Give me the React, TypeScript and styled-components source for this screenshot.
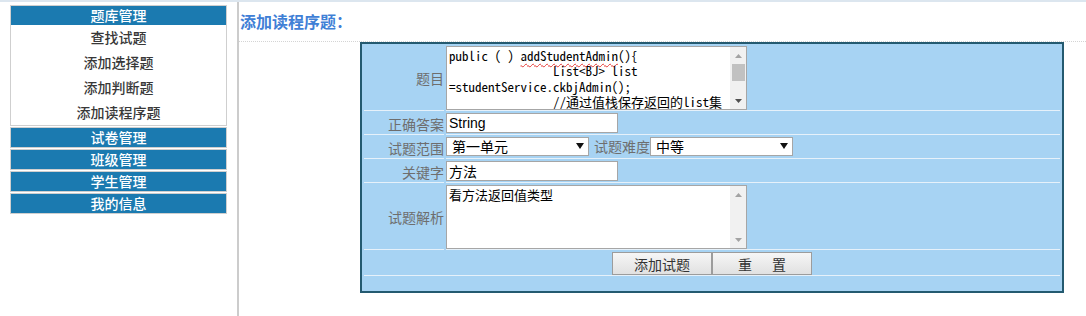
import React from 'react';
import styled, { createGlobalStyle } from 'styled-components';

const GlobalStyle = createGlobalStyle`
  html, body { margin: 0; padding: 0; background: #fff; }
  body { font-family: "Noto Sans CJK SC", sans-serif; font-size: 14px; }
`;

const Page = styled.div`
  width: 1086px;
  height: 316px;
  overflow: hidden;
  display: flex;
  flex-direction: column;
`;

const TopStrip = styled.div`
  flex: none;
  height: 2px;
  background: #dce6ef;
`;

const Body = styled.div`
  flex: 1;
  display: flex;
  min-height: 0;
`;

const Sidebar = styled.nav`
  flex: none;
  width: 217px;
  padding: 3px 10px 0 10px;
  display: flex;
  flex-direction: column;
  gap: 1px;
`;

const MenuGroup = styled.div`
  border: 1px solid #cfcfcf;
  display: flex;
  flex-direction: column;
`;

const MenuHeader = styled.div`
  height: 19px;
  line-height: 19px;
  background: #1b7ab0;
  color: #fff;
  text-align: center;
  font-size: 14px;
  font-weight: 500;
`;

const MenuItem = styled.div`
  height: 25px;
  line-height: 25px;
  text-align: center;
  color: #383838;
  font-size: 14px;
  font-weight: 500;
`;

const Main = styled.main`
  flex: 1;
  border-left: 2px solid #cccccc;
  display: flex;
  flex-direction: column;
`;

const Title = styled.h2`
  margin: 0;
  height: 40px;
  box-sizing: border-box;
  padding: 0 0 2px 1px;
  display: flex;
  align-items: center;
  border-bottom: 1px dotted #d4d4d4;
  color: #3f80d6;
  font-size: 16px;
  font-weight: bold;
`;

const FormBox = styled.div`
  margin-left: 121px;
  width: 704px;
  height: 251px;
  box-sizing: border-box;
  border: 2px solid #245a70;
  background: #a7d3f3;
  padding: 2px;
  display: grid;
  grid-template-columns: 80px 1fr;
  grid-template-rows: 65px 22px 22px 22px 65px 24px 1fr;
  gap: 2px;
`;

const Cell = styled.div`
  box-sizing: border-box;
  border-bottom: 1px solid #e6f1fa;
  display: flex;
  min-width: 0;
`;

const LabelCell = styled(Cell)`
  align-items: center;
  justify-content: flex-end;
  color: #6e6e6e;
  font-size: 14px;
`;

const FieldCell = styled(Cell)`
  align-items: flex-start;
`;

const ActionCell = styled(Cell)`
  grid-column: 1 / -1;
  align-items: flex-start;
  justify-content: center;
`;

const SpacerCell = styled.div`
  grid-column: 1 / -1;
`;

const TextInput = styled.input`
  width: 172px;
  height: 20px;
  box-sizing: border-box;
  border: 1px solid #a6a6a6;
  padding: 0 2px;
  margin: 0;
  background: #fff;
  color: #000;
  font-family: "Liberation Sans", "Noto Sans CJK SC", sans-serif;
  font-size: 14px;
  outline: none;
`;

const SelectWrap = styled.div`
  position: relative;
  display: inline-flex;
  flex: none;
`;

const Select = styled.select`
  appearance: none;
  -webkit-appearance: none;
  width: 143px;
  height: 19px;
  box-sizing: border-box;
  border: 1px solid #a6a6a6;
  border-radius: 0;
  margin: 0;
  padding: 0 16px 0 5px;
  background: #fff;
  color: #000;
  font-family: "Noto Sans CJK SC", sans-serif;
  font-size: 14px;
  line-height: 17px;
  outline: none;
`;

const SelectArrow = styled.svg`
  position: absolute;
  right: 5px;
  top: 6px;
  pointer-events: none;
`;

const InlineLabel = styled.span`
  margin-left: 5px;
  color: #6e6e6e;
  font-size: 14px;
  line-height: 19px;
`;

const TextBox = styled.div`
  width: 301px;
  height: 64px;
  box-sizing: border-box;
  border: 1px solid #a6a6a6;
  background: #fff;
  display: flex;
`;

const TextContent = styled.div`
  flex: 1;
  padding: 1px 2px;
  overflow: hidden;
  white-space: pre;
  tab-size: 8;
  color: #000;
  font-family: "Noto Sans Mono CJK SC", "Liberation Mono", monospace;
  font-size: 13px;
  line-height: 15.33px;
`;

const Squiggle = styled.span`
  text-decoration: underline wavy #e53935;
  text-decoration-thickness: 1px;
  text-underline-offset: 2px;
`;

const ScrollBar = styled.div`
  flex: none;
  width: 16px;
  background: #f1f1f1;
  display: flex;
  flex-direction: column;
`;

const ScrollButton = styled.div`
  flex: none;
  height: 17px;
  display: flex;
  align-items: center;
  justify-content: center;
`;

const ScrollTrack = styled.div`
  flex: 1;
  display: flex;
  flex-direction: column;
  align-items: center;
`;

const ScrollThumb = styled.div<{ $height: number }>`
  width: 13px;
  height: ${(p) => p.$height}px;
  background: #c1c1c1;
`;

const Button = styled.button`
  width: 100px;
  height: 23px;
  box-sizing: border-box;
  margin: 0;
  padding: 0;
  border: 1px solid #9c9c9c;
  background: linear-gradient(#f6f6f6, #e1e1e1);
  color: #333;
  font-family: "Noto Sans CJK SC", sans-serif;
  font-size: 14px;
  line-height: 20px;
  word-spacing: 17px;
`;

const Triangle: React.FC<{ dir: 'up' | 'down'; color: string }> = ({ dir, color }) => (
  <svg width="7" height="4" viewBox="0 0 7 4">
    <path d={dir === 'up' ? 'M0 4 L3.5 0 L7 4 Z' : 'M0 0 L7 0 L3.5 4 Z'} fill={color} />
  </svg>
);

const Scroller: React.FC<{ thumb?: boolean }> = ({ thumb }) => (
  <ScrollBar>
    <ScrollButton>
      <Triangle dir="up" color="#a3a3a3" />
    </ScrollButton>
    <ScrollTrack>{thumb && <ScrollThumb $height={17} />}</ScrollTrack>
    <ScrollButton>
      <Triangle dir="down" color={thumb ? '#505050' : '#a3a3a3'} />
    </ScrollButton>
  </ScrollBar>
);

const Dropdown: React.FC<{ value: string; options: string[] }> = ({ value, options }) => (
  <SelectWrap>
    <Select defaultValue={value}>
      {options.map((o) => (
        <option key={o}>{o}</option>
      ))}
    </Select>
    <SelectArrow width="8" height="6" viewBox="0 0 8 6">
      <path d="M0 0 L8 0 L4 6 Z" fill="#111" />
    </SelectArrow>
  </SelectWrap>
);

const menus = ['试卷管理', '班级管理', '学生管理', '我的信息'];
const subItems = ['查找试题', '添加选择题', '添加判断题', '添加读程序题'];

export default function App() {
  return (
    <>
      <GlobalStyle />
      <Page>
        <TopStrip />
        <Body>
          <Sidebar>
            <MenuGroup>
              <MenuHeader>题库管理</MenuHeader>
              {subItems.map((s) => (
                <MenuItem key={s}>{s}</MenuItem>
              ))}
            </MenuGroup>
            {menus.map((m) => (
              <MenuGroup key={m}>
                <MenuHeader>{m}</MenuHeader>
              </MenuGroup>
            ))}
          </Sidebar>
          <Main>
            <Title>添加读程序题：</Title>
            <FormBox>
              <LabelCell>题目</LabelCell>
              <FieldCell>
                <TextBox>
                  <TextContent>
                    {'public ( ) '}
                    <Squiggle>addStudentAdmin</Squiggle>
                    {'(){\n\t\tList<BJ> list\n=studentService.ckbjAdmin();\n\t\t//通过值栈保存返回的list集'}
                  </TextContent>
                  <Scroller thumb />
                </TextBox>
              </FieldCell>

              <LabelCell>正确答案</LabelCell>
              <FieldCell>
                <TextInput defaultValue="String" />
              </FieldCell>

              <LabelCell>试题范围</LabelCell>
              <FieldCell>
                <Dropdown value="第一单元" options={['第一单元', '第二单元', '第三单元']} />
                <InlineLabel>试题难度</InlineLabel>
                <Dropdown value="中等" options={['简单', '中等', '困难']} />
              </FieldCell>

              <LabelCell>关键字</LabelCell>
              <FieldCell>
                <TextInput defaultValue="方法" />
              </FieldCell>

              <LabelCell>试题解析</LabelCell>
              <FieldCell>
                <TextBox>
                  <TextContent>看方法返回值类型</TextContent>
                  <Scroller />
                </TextBox>
              </FieldCell>

              <ActionCell>
                <Button type="button">添加试题</Button>
                <Button type="button">重 置</Button>
              </ActionCell>
              <SpacerCell />
            </FormBox>
          </Main>
        </Body>
      </Page>
    </>
  );
}
